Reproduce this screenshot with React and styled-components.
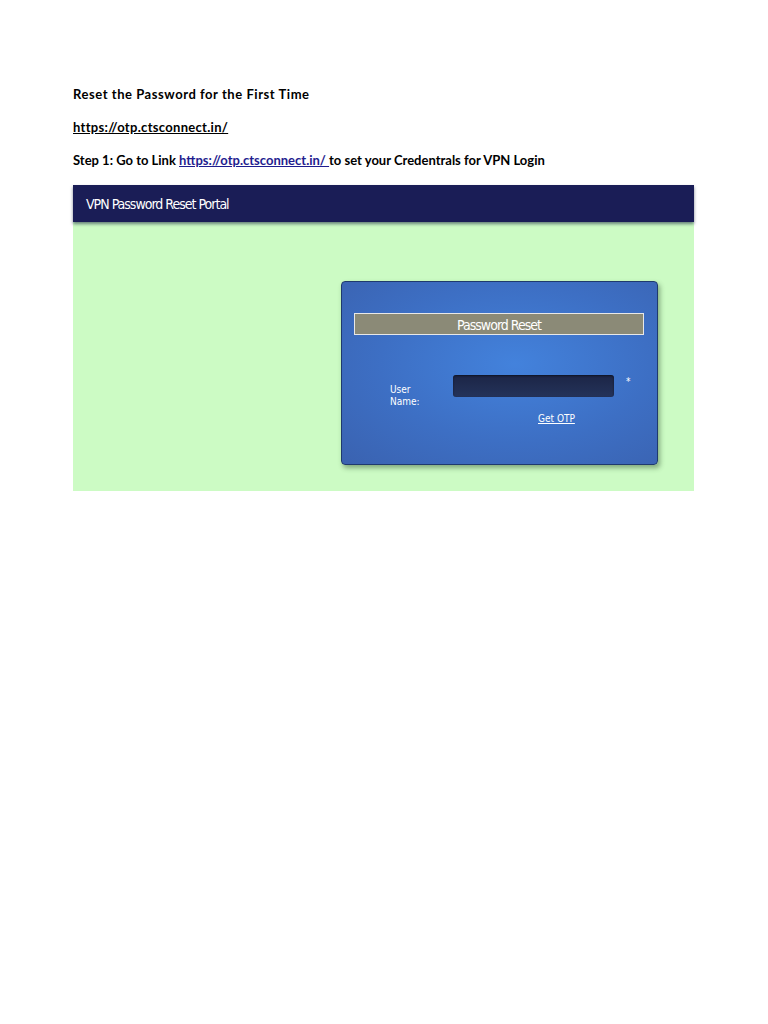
import React from 'react';
import styled, { createGlobalStyle } from 'styled-components';

const GlobalStyle = createGlobalStyle`
  body {
    margin: 0;
    background: #ffffff;
    font-family: Lato, "Open Sans", sans-serif;
  }
`;

const Page = styled.div`
  width: 768px;
  height: 1024px;
  padding: 86px 0 0 73px;
  box-sizing: border-box;
  color: #000;
`;

const Para = styled.p`
  margin: 0 0 17px 0;
  font-size: 13px;
  font-weight: 700;
  line-height: 16px;
  letter-spacing: ${(p) => p.$spacing || '0'};
`;

const DocLink = styled.a`
  color: ${(p) => (p.$blue ? '#1f1d8f' : '#000')};
  text-decoration: underline;
`;

const Shot = styled.div`
  width: 621px;
  height: 306px;
  margin-top: 8px;
  background: #ccfbc4;
  display: flex;
  flex-direction: column;
  font-family: "DejaVu Sans Condensed", "DejaVu Sans", sans-serif;
`;

const Header = styled.div`
  height: 37px;
  box-sizing: border-box;
  background: #1a1d56;
  display: flex;
  align-items: center;
  padding: 1px 0 0 13px;
  color: #fff;
  font-size: 14px;
  letter-spacing: -1px;
  box-shadow: 0 2px 3px rgba(20, 30, 60, 0.55);
`;

const Stage = styled.div`
  flex: 1;
  padding: 59px 0 0 268px;
`;

const Card = styled.div`
  width: 317px;
  height: 184px;
  box-sizing: border-box;
  border: 1px solid #1f3a6e;
  border-radius: 4px;
  background: radial-gradient(ellipse at 55% 45%, #4382dc 0%, #3d6fc4 55%, #3a62b0 100%);
  box-shadow: 2px 3px 5px rgba(40, 70, 40, 0.45);
  padding: 31px 13px 0 12px;
  display: flex;
  flex-direction: column;
`;

const TitleBar = styled.div`
  height: 22px;
  box-sizing: border-box;
  border: 1px solid #e8e8e8;
  background: #8b8a77;
  color: #fff;
  font-size: 14px;
  letter-spacing: -1px;
  padding-top: 2px;
  display: flex;
  align-items: center;
  justify-content: center;
`;

const FormRow = styled.div`
  display: flex;
  align-items: flex-start;
  margin-top: 40px;
`;

const Label = styled.div`
  width: 63px;
  margin-left: 36px;
  padding-top: 9px;
  color: #fff;
  font-size: 10px;
  line-height: 12px;
`;

const Input = styled.div`
  width: 161px;
  height: 22px;
  border-radius: 3px;
  background: linear-gradient(#1c2546, #24335a);
  box-shadow: inset 0 1px 2px rgba(0, 0, 0, 0.5);
`;

const Required = styled.span`
  margin-left: 12px;
  margin-top: 1px;
  color: #fff;
  font-size: 10px;
`;

const OtpLink = styled.a`
  margin: 5px 0 0 184px;
  color: #fff;
  font-size: 10px;
  text-decoration: underline;
`;

export default function App() {
  return (
    <>
      <GlobalStyle />
      <Page>
        <Para $spacing="0.55px">Reset the Password for the First Time</Para>
        <Para $spacing="0.3px">
          <DocLink href="#">https://otp.ctsconnect.in/</DocLink>
        </Para>
        <Para>
          Step 1: Go to Link <DocLink $blue href="#">https://otp.ctsconnect.in/ </DocLink>to set your Credentrals for VPN Login
        </Para>
        <Shot>
          <Header>VPN Password Reset Portal</Header>
          <Stage>
            <Card>
              <TitleBar>Password Reset</TitleBar>
              <FormRow>
                <Label>
                  User
                  <br />
                  Name:
                </Label>
                <Input />
                <Required>*</Required>
              </FormRow>
              <OtpLink href="#">Get OTP</OtpLink>
            </Card>
          </Stage>
        </Shot>
      </Page>
    </>
  );
}
